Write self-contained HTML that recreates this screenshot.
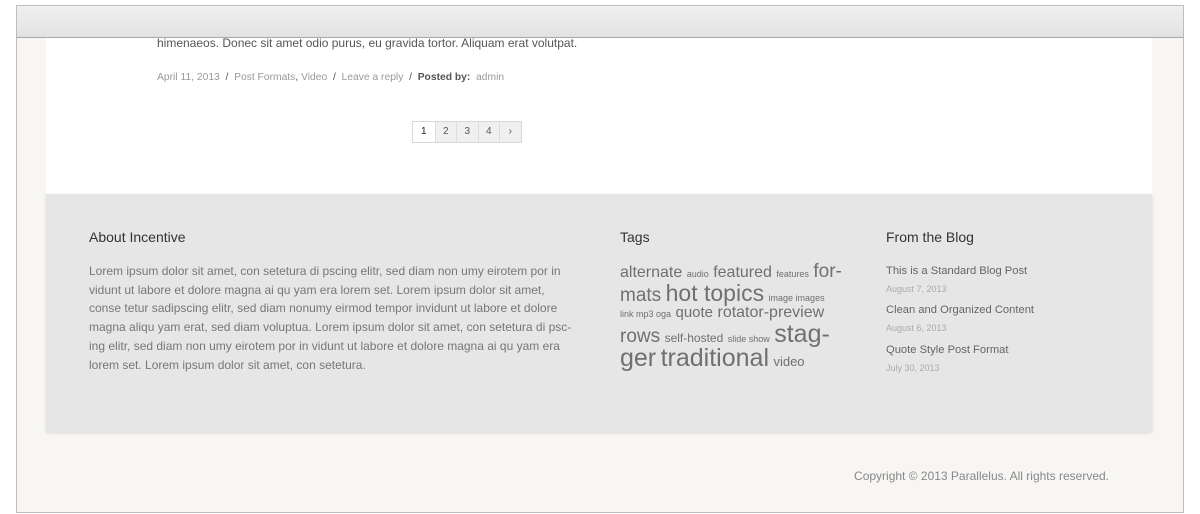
<!DOCTYPE html>
<html><head><meta charset="utf-8"><style>
*{margin:0;padding:0;box-sizing:border-box}
body{width:1200px;height:514px;background:#fff;font-family:"Liberation Sans",Arial,sans-serif;position:relative;overflow:hidden;color:#666}
.frame{position:absolute;left:16px;top:5px;width:1168px;height:508px;border:1px solid #bdbdbd;background:#f7f6f4}
.top{position:absolute;left:16px;top:5px;width:1168px;height:33px;background:linear-gradient(#f0f0f0,#e2e2e2);border:1px solid #bdbdbd;border-bottom:1px solid #a8a8a8;z-index:3}
.white{position:absolute;left:46px;top:37px;width:1106px;height:157px;background:#fff}
.foot{position:absolute;left:46px;top:194px;width:1106px;height:238px;background:#e6e6e6;box-shadow:0 1px 3px rgba(0,0,0,.12)}
.a{position:absolute;white-space:nowrap}
.meta{font-size:10.3px;color:#999}
.meta b{color:#555}
.pg{position:absolute;left:412px;top:121px;height:22px;display:flex;border:1px solid #d8d8d8}
.pg span{width:21.5px;height:20px;font-size:10px;line-height:20px;text-align:center;color:#555;background:#f0f0f0;border-left:1px solid #ddd}
.pg span:first-child{background:#fff;border-left:none;color:#222}
h3{position:absolute;font-size:14px;font-weight:normal;color:#333;white-space:nowrap}
.p{position:absolute;left:89px;top:262px;font-size:12px;line-height:18.7px;color:#777;white-space:nowrap}
.tg{color:#707070}
.bl{font-size:11.2px;color:#666}
.dt{font-size:9px;color:#aaa}
</style></head><body>
<div class="frame"></div>
<div class="top"></div>
<div class="white"></div>
<div class="a" style="left:157px;top:36px;font-size:12px;color:#555;z-index:2">himenaeos. Donec sit amet odio purus, eu gravida tortor. Aliquam erat volutpat.</div>
<div class="a meta" style="left:157px;top:72px">April 11, 2013 &nbsp;<span style="color:#555">/</span>&nbsp; Post Formats<span style="color:#555">,</span> Video &nbsp;<span style="color:#555">/</span>&nbsp; Leave a reply &nbsp;<span style="color:#555">/</span>&nbsp; <b>Posted by:</b> &nbsp;admin</div>
<div class="pg"><span>1</span><span>2</span><span>3</span><span>4</span><span>&#8250;</span></div>
<div class="foot"></div>
<h3 style="left:89px;top:229px">About Incentive</h3>
<div class="p">Lorem ipsum dolor sit amet, con setetura di pscing elitr, sed diam non umy eirotem por in<br>vidunt ut labore et dolore magna ai qu yam era lorem set. Lorem ipsum dolor sit amet,<br>conse tetur sadipscing elitr, sed diam nonumy eirmod tempor invidunt ut labore et dolore<br>magna aliqu yam erat, sed diam voluptua. Lorem ipsum dolor sit amet, con setetura di psc-<br>ing elitr, sed diam non umy eirotem por in vidunt ut labore et dolore magna ai qu yam era<br>lorem set. Lorem ipsum dolor sit amet, con setetura.</div>
<h3 style="left:620px;top:229px">Tags</h3>
<div class="a tg" style="left:620px;top:262px;line-height:20px"><span style="font-size:16px">alternate</span> <span style="font-size:9px">audio</span> <span style="font-size:16px">featured</span> <span style="font-size:9px">features</span> <span style="font-size:19px">for-</span></div>
<div class="a tg" style="left:620px;top:281px;line-height:24px"><span style="font-size:19px">mats</span> <span style="font-size:23px">hot topics</span> <span style="font-size:9px">image images</span></div>
<div class="a tg" style="left:620px;top:304px;line-height:18px"><span style="font-size:9px">link mp3 oga</span> <span style="font-size:15px">quote</span> <span style="font-size:16px">rotator-preview</span></div>
<div class="a tg" style="left:620px;top:320px;line-height:28px"><span style="font-size:19px">rows</span> <span style="font-size:12px">self-hosted</span> <span style="font-size:9px">slide show</span> <span style="font-size:25px">stag-</span></div>
<div class="a tg" style="left:620px;top:344px;line-height:28px"><span style="font-size:25px">ger</span> <span style="font-size:25px">traditional</span> <span style="font-size:13px">video</span></div>
<h3 style="left:886px;top:229px">From the Blog</h3>
<div class="a bl" style="left:886px;top:265px">This is a Standard Blog Post</div>
<div class="a dt" style="left:886px;top:284px">August 7, 2013</div>
<div class="a bl" style="left:886px;top:304px">Clean and Organized Content</div>
<div class="a dt" style="left:886px;top:323px">August 6, 2013</div>
<div class="a bl" style="left:886px;top:344px">Quote Style Post Format</div>
<div class="a dt" style="left:886px;top:363px">July 30, 2013</div>
<div class="a" style="right:91px;top:469px;font-size:12px;color:#888">Copyright © 2013 Parallelus. All rights reserved.</div>
</body></html>
